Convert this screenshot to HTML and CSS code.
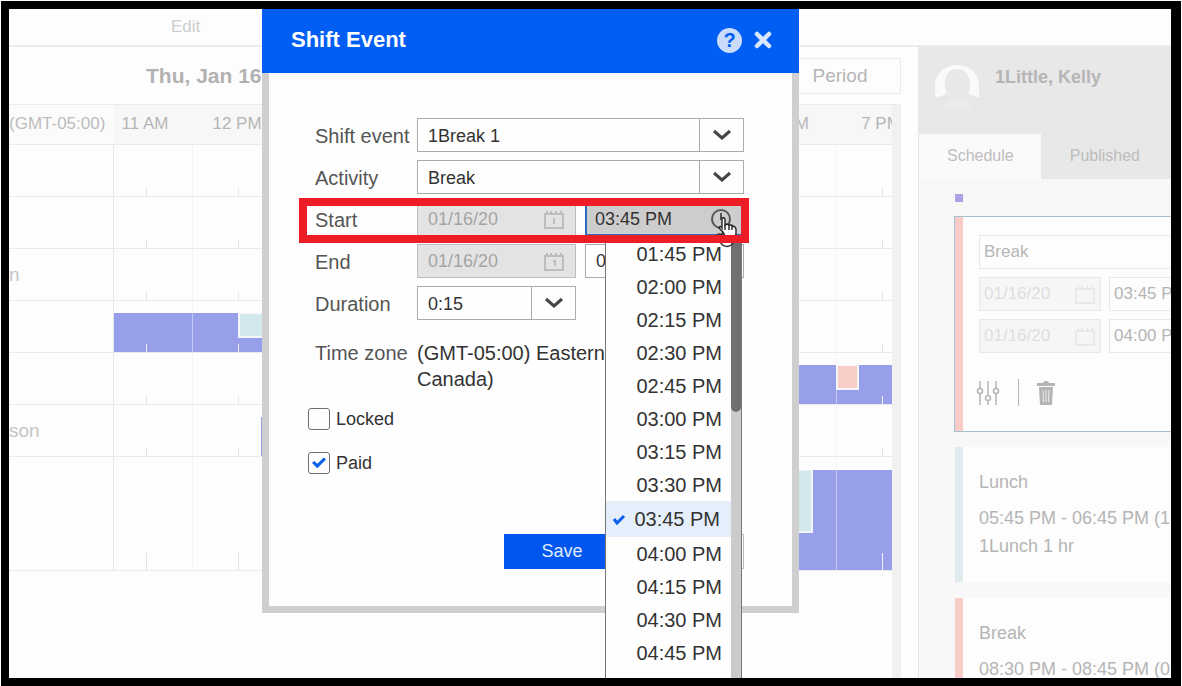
FILE: index.html
```html
<!DOCTYPE html>
<html lang="en">
<head>
    <meta charset="UTF-8">
    <meta name="viewport" content="width=device-width, initial-scale=1.0">
    <title>Shift Event</title>
    <link rel="stylesheet" href="styles.css">
</head>
<body>

<div class="frame">
    <header class="toolbar"><a href="#">Edit</a></header>

    <div class="main">
        <section class="schedule">
            <div class="date-bar">
                <h2>Thu, Jan 16</h2>
                <button class="period">Period</button>
            </div>
            <div class="planner">
                <div class="grid">
                    <div class="row hours">
                        <div class="name">(GMT-05:00)</div>
                        <div class="track">
                            <span>11 AM</span><span>12 PM</span><span>1 PM</span><span>2 PM</span><span>3 PM</span><span>4 PM</span><span>5 PM</span><span>6 PM</span><span>7 PM</span>
                        </div>
                    </div>
                    <div class="row"><div class="name"></div><div class="track"></div></div>
                    <div class="row"><div class="name"></div><div class="track"></div></div>
                    <div class="row"><div class="name">n</div><div class="track"></div></div>
                    <div class="row">
                        <div class="name"></div>
                        <div class="track">
                            <div class="shift" style="margin-left: 0; width: 460px">
                                <div class="event lunch" style="left: 124px; width: 92px"></div>
                            </div>
                        </div>
                    </div>
                    <div class="row">
                        <div class="name"></div>
                        <div class="track">
                            <div class="shift" style="margin-left: 276px; width: 644px">
                                <div class="event break" style="left: 446px; width: 23px"></div>
                            </div>
                        </div>
                    </div>
                    <div class="row">
                        <div class="name">son</div>
                        <div class="track">
                            <div class="shift" style="margin-left: 147px; width: 368px"></div>
                        </div>
                    </div>
                    <div class="row tall">
                        <div class="name"></div>
                        <div class="track">
                            <div class="shift" style="margin-left: 276px; width: 644px">
                                <div class="event lunch" style="left: 331px; width: 92px"></div>
                            </div>
                        </div>
                    </div>
                </div>
                <div class="planner-scroll"></div>
            </div>
        </section>

        <aside class="details">
            <div class="person">
                <svg class="avatar" width="46" height="46" viewBox="0 0 46 46">
                    <path d="M1 34V22a22 20 0 0 1 44 0v12q-6 0-11-4a15 15 0 0 0 2-10c0-8-5-14-13-14s-12 6-12 14a15 15 0 0 0 2 10q-6 4-12 4z" fill="#fafafa"/>
                    <path d="M9 46q2-9 14-10 12 1 14 10z" fill="#ececec"/>
                </svg>
                <strong>1Little, Kelly</strong>
            </div>
            <nav class="tabs">
                <a href="#" class="active">Schedule</a>
                <a href="#">Published</a>
            </nav>
            <div class="cards">
                <div class="marker"></div>
                <div class="card selected">
                    <input type="text" value="Break" aria-label="Event">
                    <div class="when">
                        <div class="field">
                            <input type="text" value="01/16/20" aria-label="Start date" disabled>
                            <svg class="calendar" width="20" height="19" viewBox="0 0 20 19"><path d="M1 4v14h18V4zM1 4h18M3 1v2M7 1v2M12 1v2M17 1v2"/></svg>
                        </div>
                        <input type="text" value="03:45 PM" aria-label="Start time">
                    </div>
                    <div class="when">
                        <div class="field">
                            <input type="text" value="01/16/20" aria-label="End date" disabled>
                            <svg class="calendar" width="20" height="19" viewBox="0 0 20 19"><path d="M1 4v14h18V4zM1 4h18M3 1v2M7 1v2M12 1v2M17 1v2"/></svg>
                        </div>
                        <input type="text" value="04:00 PM" aria-label="End time">
                    </div>
                    <div class="actions">
                        <button aria-label="Settings">
                            <svg width="24" height="24" viewBox="0 0 24 24" fill="none" stroke="#b8b8b8" stroke-width="1.6">
                                <path d="M4 0v7M4 13v11M12 0v14M12 20v4M20 0v7M20 13v11"/>
                                <circle cx="4" cy="10" r="2.5"/><circle cx="12" cy="17" r="2.5"/><circle cx="20" cy="10" r="2.5"/>
                            </svg>
                        </button>
                        <span class="divider"></span>
                        <button aria-label="Delete">
                            <svg width="18" height="24" viewBox="0 0 18 24">
                                <path d="M6 2q0-2 3-2t3 2h6v3H0V2zM2 6h14l-1 18H3z" fill="#b4b4b4"/>
                                <path d="M6 9l.5 12M9 9v12M12 9l-.5 12" stroke="#e6e6e6" stroke-width="1.2"/>
                            </svg>
                        </button>
                    </div>
                </div>
                <div class="card lunch-card">
                    <p class="title">Lunch</p>
                    <p>05:45 PM - 06:45 PM (1 hr)</p>
                    <p>1Lunch 1 hr</p>
                </div>
                <div class="card">
                    <p class="title">Break</p>
                    <p>08:30 PM - 08:45 PM (0:15)</p>
                </div>
            </div>
        </aside>
    </div>

    <div class="modal" role="dialog" aria-labelledby="modal-title">
        <div class="modal-header">
            <h1 id="modal-title">Shift Event</h1>
            <button aria-label="Help"><span class="help">?</span></button>
            <button aria-label="Close">
                <svg width="18" height="18" viewBox="0 0 18 18"><path d="M3 3l12 12M15 3L3 15" stroke="#d9e6fc" stroke-width="4.5" stroke-linecap="round"/></svg>
            </button>
        </div>
        <form class="modal-body">
            <div class="form-row">
                <label for="shift-event">Shift event</label>
                <div class="select">
                    <select id="shift-event"><option>1Break 1</option></select>
                    <span class="arrow"><svg width="18" height="12" viewBox="0 0 18 12"><path d="M1 2l8 7 8-7"/></svg></span>
                </div>
            </div>
            <div class="form-row">
                <label for="activity">Activity</label>
                <div class="select">
                    <select id="activity"><option>Break</option></select>
                    <span class="arrow"><svg width="18" height="12" viewBox="0 0 18 12"><path d="M1 2l8 7 8-7"/></svg></span>
                </div>
            </div>
            <div class="form-row start-row">
                <label for="start-date">Start</label>
                <div class="field">
                    <input type="text" id="start-date" value="01/16/20" disabled>
                    <svg class="calendar" width="20" height="19" viewBox="0 0 20 19"><path d="M1 4v14h18V4zM1 4h18M3 1v2M7 1v2M12 1v2M17 1v2M10 8v6"/></svg>
                </div>
                <div class="field time">
                    <input type="text" class="open" value="03:45 PM" aria-label="Start time">
                    <svg class="clock" width="20" height="20" viewBox="0 0 20 20"><circle cx="10" cy="10" r="9"/><path d="M10 4v7"/></svg>
                    <div class="time-menu">
                        <ul role="listbox">
                            <li role="option">01:45 PM</li>
                            <li role="option">02:00 PM</li>
                            <li role="option">02:15 PM</li>
                            <li role="option">02:30 PM</li>
                            <li role="option">02:45 PM</li>
                            <li role="option">03:00 PM</li>
                            <li role="option">03:15 PM</li>
                            <li role="option">03:30 PM</li>
                            <li role="option" class="chosen" aria-selected="true">
                                <svg width="14" height="11" viewBox="0 0 14 11"><path d="M2 5l3 4 7-7" fill="none" stroke="#0b5fea" stroke-width="3"/></svg>
                                03:45 PM
                            </li>
                            <li role="option">04:00 PM</li>
                            <li role="option">04:15 PM</li>
                            <li role="option">04:30 PM</li>
                            <li role="option">04:45 PM</li>
                        </ul>
                        <div class="menu-scroll"><div class="thumb"></div></div>
                    </div>
                    <svg class="pointer" width="24" height="34" viewBox="0 0 24 34">
                        <circle cx="11" cy="25" r="7.5" fill="none" stroke="#333" stroke-width="1.5"/>
                        <circle cx="3" cy="22" r="2" fill="#fff" stroke="#333" stroke-width="1.5"/>
                        <path d="M6 4q2-1 3 1v6l2-1 2 1 2 0 2 1 2 1 1 2v5l-2 4H10l-3-6-4-4q1-3 3 0z" fill="#fff" stroke="#222" stroke-width="1.4"/>
                        <path d="M9 11v5M13 11v5M16 12v4" stroke="#222" stroke-width="1.4"/>
                    </svg>
                </div>
                <div class="highlight"></div>
            </div>
            <div class="form-row">
                <label for="end-date">End</label>
                <div class="field">
                    <input type="text" id="end-date" value="01/16/20" disabled>
                    <svg class="calendar" width="20" height="19" viewBox="0 0 20 19"><path d="M1 4v14h18V4zM1 4h18M3 1v2M7 1v2M12 1v2M17 1v2M9 9h2v5"/></svg>
                </div>
                <div class="field"><input type="text" value="04:00 PM" aria-label="End time"></div>
            </div>
            <div class="form-row">
                <label for="duration">Duration</label>
                <div class="select short">
                    <select id="duration"><option>0:15</option></select>
                    <span class="arrow"><svg width="18" height="12" viewBox="0 0 18 12"><path d="M1 2l8 7 8-7"/></svg></span>
                </div>
            </div>
            <div class="form-row zone">
                <span class="label">Time zone</span>
                <p>(GMT-05:00) Eastern Time (US &amp; Canada)</p>
            </div>
            <label class="check"><input type="checkbox"> Locked</label>
            <label class="check"><input type="checkbox" checked> Paid</label>
            <div class="buttons">
                <button type="button" class="save">Save</button>
                <button type="button" class="cancel">Cancel</button>
            </div>
        </form>
    </div>
</div>

</body>
</html>
```

FILE: styles.css
```css
* { box-sizing: border-box; }
body {
    margin: 0;
    padding: 1px 1px 0 1px;
    font-family: "Liberation Sans", Arial, sans-serif;
    color: #b5b5b5;
}
h1, h2, p, ul { margin: 0; padding: 0; }
a { color: inherit; text-decoration: none; }
button, input, select { font-family: inherit; color: inherit; margin: 0; }
button { border: 0; padding: 0; background: none; cursor: pointer; }

.frame {
    position: relative;
    display: flex;
    flex-direction: column;
    height: calc(100vh - 1px);
    border: 8px solid #000;
    border-right-width: 10px;
    background: #fdfdfd;
    overflow: hidden;
}
.toolbar {
    flex: none;
    height: 38px;
    padding-left: 162px;
    border-bottom: 2px solid #ececec;
    font-size: 17px;
    line-height: 35px;
    color: #cdcdcd;
}
.main { display: flex; flex: 1; min-height: 0; }

/* schedule grid */
.schedule {
    display: flex;
    flex-direction: column;
    flex: 1;
    min-width: 0;
    padding-right: 17px;
}
.date-bar {
    display: flex;
    justify-content: space-between;
    align-items: center;
    height: 57px;
    padding-left: 137px;
}
.date-bar h2 { font-size: 21px; color: #b2b2b2; }
.period {
    width: 122px;
    height: 36px;
    border: 1px solid #ebebeb;
    font-size: 19px;
}
.planner { display: flex; flex: 1; border-top: 1px solid #ebebeb; }
.grid { flex: 1; min-width: 0; }
.planner-scroll { width: 9px; background: #f1f1f1; }
.row { display: flex; height: 52px; border-bottom: 1px solid #ebebeb; }
.row.hours { height: 40px; font-size: 17px; background: #f7f7f7; }
.row.tall { height: 114px; }
.name {
    flex: none;
    width: 105px;
    border-right: 1px solid #e9e9e9;
    font-size: 19px;
    line-height: 52px;
    color: #c4c4c4;
}
.hours .name { font-size: 17px; line-height: 38px; color: #bcbcbc; background: #fbfbfb; border: 0; }
.track {
    display: flex;
    align-items: flex-end;
    flex: 1;
    min-width: 0;
    overflow: hidden;
    background:
        linear-gradient(to right, #e2e2e2 1px, transparent 1px) 32px 100% / 92px 8px repeat-x,
        linear-gradient(to right, #f3f3f3 1px, transparent 1px) 78px 0 / 92px 100% repeat-x;
}
.tall .track { background-size: 92px 17px, 92px 100%; }
.hours .track { align-items: flex-start; background: none; }
.hours span { flex: none; width: 92px; text-align: center; line-height: 38px; }
.hours span:first-child { margin-left: -15px; }
.shift {
    position: relative;
    flex: none;
    height: 39px;
    background:
        linear-gradient(to right, #eef0fc 1px, transparent 1px) 32px 100% / 92px 8px repeat-x,
        linear-gradient(to right, #c3c8f4 1px, transparent 1px) 78px 0 / 92px 100% repeat-x,
        #989fea;
}
.tall .shift { height: 100px; background-size: 92px 17px, 92px 100%, auto; }
.event {
    position: absolute;
    top: 0;
    height: 25px;
    border: 2px solid #f4f6fb;
    border-top-width: 1px;
}
.event.lunch { background: #d3e8ec; }
.event.break { background: #f8cdc8; }
.tall .event { height: 63px; }

/* right panel */
.details {
    flex: none;
    width: 253px;
    border-left: 1px solid #e6e6e6;
    background: #f8f8f8;
    overflow: hidden;
}
.person {
    display: flex;
    gap: 15px;
    height: 87px;
    padding: 16px 0 0 15px;
    background: #e8e8e8;
    font-size: 18px;
    line-height: 28px;
}
.avatar { flex: none; }
.tabs { display: flex; height: 45px; background: #e8e8e8; font-size: 16px; line-height: 43px; color: #bdbdbd; }
.tabs a { padding: 0 29px; white-space: nowrap; }
.tabs a.active { background: #fafafa; padding: 0 27px 0 28px; }
.cards { width: 340px; padding: 15px 0 0 36px; font-size: 18px; line-height: 28px; }
.marker { width: 8px; height: 8px; margin-bottom: 15px; background: #aaa3e6; }
.card {
    height: 135px;
    margin-bottom: 16px;
    padding: 21px 16px;
    border-left: 8px solid #f8cdc8;
    background: #fdfdfd;
}
.card.lunch-card { border-color: #dfebed; }
.card .title { margin-bottom: 8px; }
.card.selected {
    height: 214px;
    padding: 18px 16px;
    outline: 1px solid #a9c0d2;
    border-color: #f8cdc8;
}
.card input {
    display: block;
    width: 270px;
    height: 34px;
    padding: 0 4px;
    border: 1px solid #e8e8e8;
    background: #fdfdfd;
    font-size: 17px;
}
.when { display: flex; gap: 8px; margin-top: 8px; }
.card .field { width: 122px; }
.card .field input { width: 122px; background: #f6f6f6; color: #dedede; }
.card .when > input { width: 122px; }
.card .calendar { right: 6px; stroke: #e9e9e9; }
.actions { display: flex; align-items: center; gap: 18px; margin: 26px 0 0 -3px; }
.actions button { height: 24px; }
.actions svg { display: block; }
.divider { width: 1px; height: 27px; background: #b4b4b4; }

/* shift event dialog */
.modal {
    position: absolute;
    top: 0;
    left: 253px;
    width: 537px;
    background: #fefefe;
    border: 7px solid #cfcfcf;
    border-top: 0;
    color: #555;
    font-size: 20px;
}
.modal-header {
    display: flex;
    align-items: center;
    gap: 12px;
    height: 64px;
    margin: 0 -7px;
    padding: 0 27px 2px 29px;
    background: #005ef5;
    color: #fff;
}
.modal-header h1 { flex: 1; font-size: 22px; }
.modal-header svg { display: block; }
.help {
    display: block;
    width: 25px;
    height: 25px;
    border-radius: 50%;
    background: #c9dcfb;
    color: #005ef5;
    font-size: 20px;
    font-weight: bold;
    line-height: 25px;
}
.modal-body { padding: 45px 48px 37px 46px; }
.form-row {
    position: relative;
    display: flex;
    gap: 9px;
    height: 34px;
    margin-bottom: 8px;
    line-height: 36px;
}
.form-row > label, .label { flex: none; width: 93px; white-space: nowrap; }
.field { position: relative; width: 159px; }
.modal .field input, .select select {
    display: block;
    width: 100%;
    height: 34px;
    padding: 1px 10px 0;
    border: 1px solid #ababab;
    border-radius: 0;
    background: #fefefe;
    color: #333;
    font-size: 18px;
}
.modal .field input:disabled { background: #e3e3e3; border-color: #bdbdbd; color: #a5a5a5; }
.modal .field input.open { background: #cdcdcd; border: 2px solid #2a6fc0; padding: 1px 8px 0; }
.calendar {
    position: absolute;
    top: 8px;
    right: 12px;
    fill: none;
    stroke: #bdbdbd;
    stroke-width: 2;
}
.clock {
    position: absolute;
    top: 7px;
    right: 13px;
    fill: none;
    stroke: #555;
    stroke-width: 2;
}
.select { position: relative; width: 327px; }
.select.short { width: 159px; }
.select select { appearance: none; }
.arrow {
    position: absolute;
    top: 0;
    right: 0;
    display: flex;
    align-items: center;
    justify-content: center;
    width: 45px;
    height: 34px;
    border: 1px solid #ababab;
    pointer-events: none;
}
.arrow path { fill: none; stroke: #444; stroke-width: 3; }
.start-row { z-index: 2; }
.highlight {
    position: absolute;
    top: -4px;
    left: -16px;
    width: 450px;
    height: 45px;
    border: 8px solid #ee1c24;
    pointer-events: none;
}
.time-menu {
    position: absolute;
    top: 34px;
    left: 20px;
    display: flex;
    width: 137px;
    height: 100vh;
    border: 1px solid #777;
    background: #fefefe;
    color: #333;
}
.time-menu ul { flex: 1; list-style: none; }
.time-menu li {
    display: flex;
    align-items: center;
    justify-content: flex-end;
    height: 33px;
    padding-right: 9px;
    white-space: nowrap;
}
.time-menu li.chosen { height: 36px; gap: 8px; padding-right: 11px; background: #e5eefb; }
.menu-scroll { width: 10px; background: #cbcbcb; }
.thumb { height: 175px; border-radius: 0 0 5px 5px; background: #707070; }
.pointer { position: absolute; top: 12px; left: 131px; }
.form-row.zone { height: auto; margin: 20px 0 0; line-height: 26px; }
.zone p { color: #333; width: 327px; }
.check {
    display: flex;
    align-items: center;
    gap: 6px;
    height: 22px;
    margin: 16px 0 0 -7px;
    color: #333;
    font-size: 18px;
}
.check + .check { margin-top: 22px; }
.check input {
    appearance: none;
    display: grid;
    place-items: center;
    width: 22px;
    height: 22px;
    border: 1px solid #6f6f6f;
    border-radius: 3px;
    background: #fefefe;
}
.check input:checked::after {
    content: "";
    width: 14px;
    height: 12px;
    background: #0b5fea;
    clip-path: polygon(0 50%, 16% 34%, 38% 56%, 84% 4%, 100% 20%, 38% 94%);
}
.buttons { display: flex; justify-content: flex-end; gap: 8px; margin-top: 60px; }
.buttons button { width: 116px; height: 35px; font-size: 18px; }
.buttons .save { background: #0056ee; color: #dfeafc; }
.buttons .cancel { border: 1px solid #bbb; color: #333; }
```
